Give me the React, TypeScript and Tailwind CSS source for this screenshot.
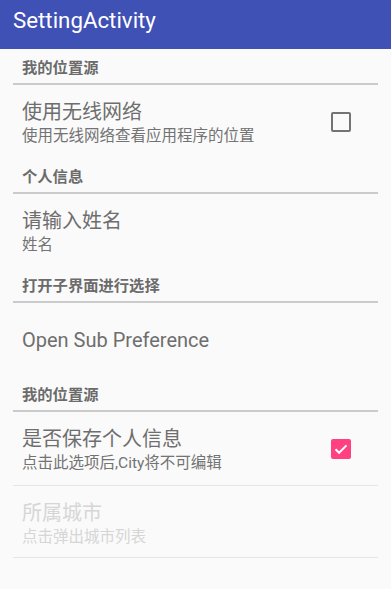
import React, { useState } from 'react';

const cjk = "font-['Roboto','Noto_Sans_CJK_SC',sans-serif]";

function Category({ title }: { title: string }) {
  return (
    <div className="h-[36px] pt-[11px]">
      <div className="pl-[22px] text-[15.3px] leading-[16px] font-bold text-[#6b6b6b]">{title}</div>
      <div className="mx-[13px] mt-[7px] h-[2px] bg-[#cbcbcb]" />
    </div>
  );
}

function Checkbox({ checked, onClick }: { checked: boolean; onClick: () => void }) {
  return (
    <button
      onClick={onClick}
      className={
        checked
          ? 'flex h-[20px] w-[20px] items-center justify-center rounded-[2px] bg-[#ff4081]'
          : 'h-[20px] w-[20px] rounded-[2px] border-2 border-[#737373]'
      }
    >
      {checked && (
        <svg viewBox="0 0 20 20" className="h-[20px] w-[20px]">
          <path d="M4.5 10.2l3.6 3.6 7.4-7.4" fill="none" stroke="#fff" strokeWidth={2} />
        </svg>
      )}
    </button>
  );
}

function Item({
  title,
  summary,
  disabled,
  right,
  short,
}: {
  title: string;
  summary?: string;
  disabled?: boolean;
  right?: React.ReactNode;
  short?: boolean;
}) {
  const titleColor = disabled ? 'text-[#d6d6d6]' : 'text-[#6e6e6e]';
  const summaryColor = disabled ? 'text-[#d6d6d6]' : 'text-[#737373]';
  return (
    <div
      className={`flex items-center pl-[22px] pr-[40px] ${short ? 'h-[71px]' : 'h-[73px]'}`}
    >
      <div className={`flex-1 ${summary ? 'self-start pt-[15px]' : ''}`}>
        <div className={`text-[20px] leading-[24px] ${titleColor}`}>{title}</div>
        {summary && <div className={`mt-[2px] text-[15.5px] leading-[20px] ${summaryColor}`}>{summary}</div>}
      </div>
      {right}
    </div>
  );
}

export default function App() {
  const [wireless, setWireless] = useState(false);
  const [save, setSave] = useState(true);

  return (
    <div className={`h-[589px] w-full overflow-hidden bg-[#fafafa] ${cjk}`}>
      {/* Toolbar */}
      <div className="flex h-[49px] items-start bg-[#3f51b5] pl-[13px] pt-[5px]">
        <span className="text-[22.3px] leading-[30px] text-white">SettingActivity</span>
      </div>

      <Category title="我的位置源" />
      <Item
        title="使用无线网络"
        summary="使用无线网络查看应用程序的位置"
        right={<Checkbox checked={wireless} onClick={() => setWireless(!wireless)} />}
      />

      <Category title="个人信息" />
      <Item title="请输入姓名" summary="姓名" />

      <Category title="打开子界面进行选择" />
      <Item title="Open Sub Preference" />

      <Category title="我的位置源" />
      <Item
        title="是否保存个人信息"
        summary="点击此选项后,City将不可编辑"
        right={<Checkbox checked={save} onClick={() => setSave(!save)} />}
      />
      <div className="mx-[13px] h-px bg-[#e6e6e6]" />
      <Item title="所属城市" summary="点击弹出城市列表" disabled short />
      <div className="mx-[13px] h-px bg-[#e6e6e6]" />
    </div>
  );
}
